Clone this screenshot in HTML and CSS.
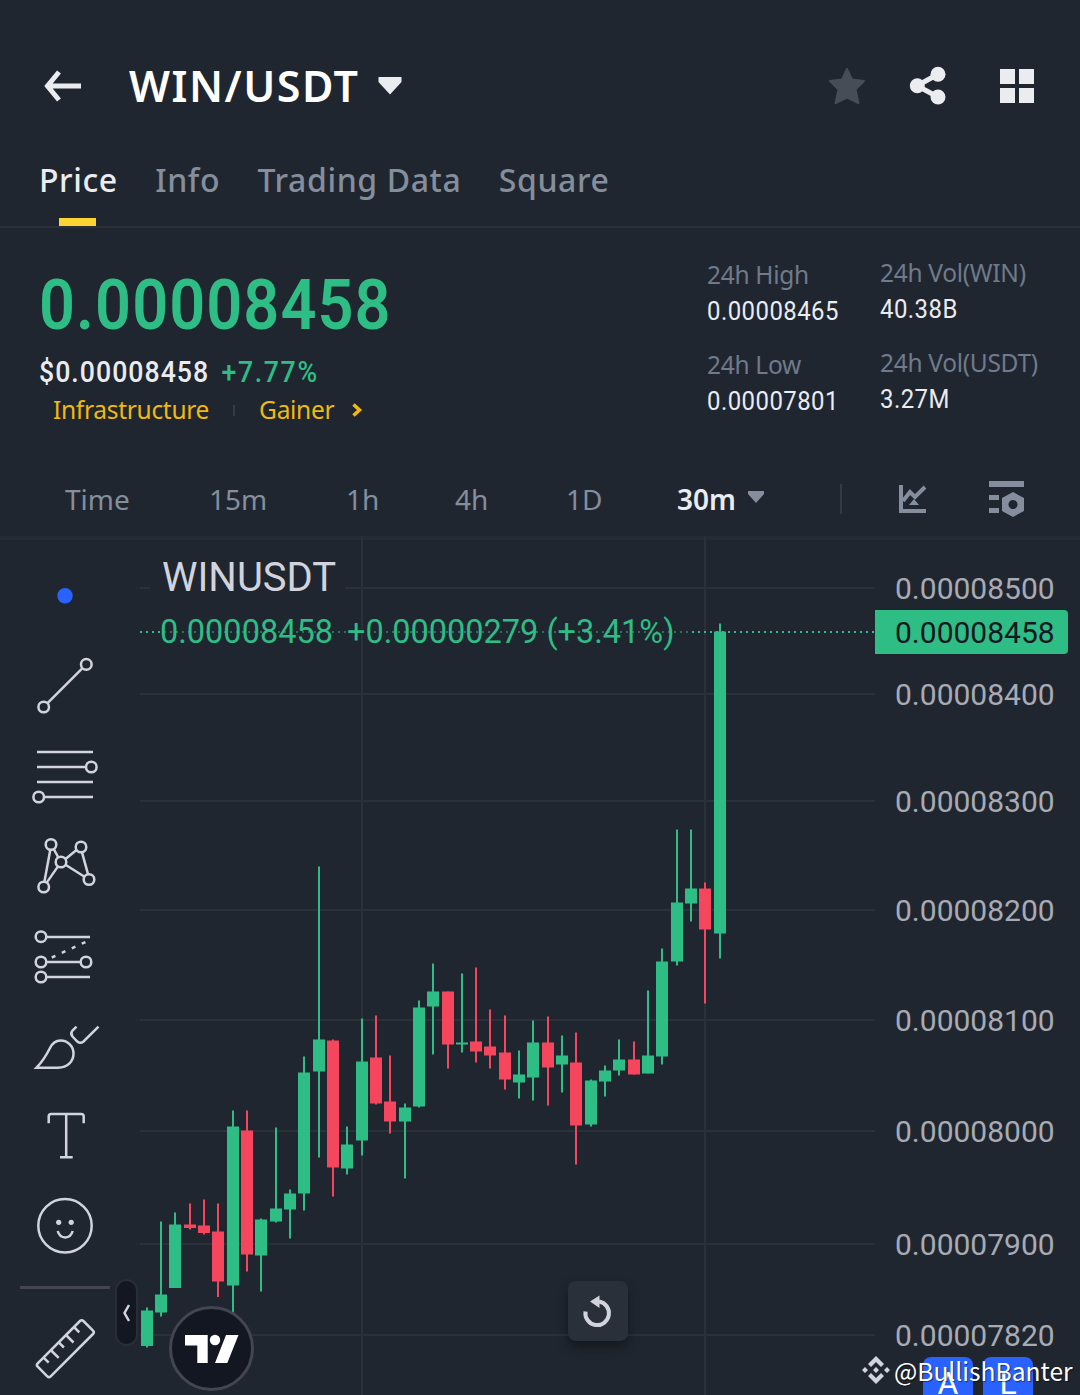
FILE: index.html
```html
<!DOCTYPE html>
<html lang="en">
  <head>
    <meta charset="UTF-8" />
    <meta name="viewport" content="width=device-width, initial-scale=1.0" />
    <title>WIN/USDT</title>
    <link rel="stylesheet" href="styles.css">
  </head>
  <body>
    <header class="header">
      <svg class="back" width="38" height="32" viewBox="0 0 38 32">
        <path d="M15 2 L3.500 16 L15 30 M3 16 H37" />
      </svg>
      <h1 class="pair">WIN/USDT</h1>
      <svg class="pair-caret" width="24" height="18" viewBox="0 0 24 18">
        <path d="M0.5 0 H23.5 V5 L12 17.5 L0.5 5 Z" />
      </svg>
      <div class="header-icons">
        <svg class="star" width="38" height="40" viewBox="0 0 38 40">
          <path d="M19 3 L24 13.500 L36 15 L27.500 23.500 L30.500 37 L19 31.500 L7.500 37 L10.500 23.500 L2 15 L14 13.500 Z" />
        </svg>
        <svg class="share" width="38" height="40" viewBox="0 0 38 40">
          <path d="M29 8.300 L8 19.700 L29 31" />
          <circle cx="29" cy="8.300" r="7.500" />
          <circle cx="8.300" cy="19.700" r="7.500" />
          <circle cx="29" cy="31" r="7.500" />
        </svg>
        <svg class="apps" width="34" height="34" viewBox="0 0 34 34">
          <path d="M0 0h15v15H0z M19 0h15v15H19z M0 19h15v15H0z M19 19h15v15H19z" />
        </svg>
      </div>
    </header>

    <nav class="tabs">
      <a class="tab active">Price</a>
      <a class="tab">Info</a>
      <a class="tab">Trading Data</a>
      <a class="tab">Square</a>
    </nav>

    <section class="summary">
      <div class="last">
        <div class="price">0.00008458</div>
        <div class="fiat">$0.00008458 <span class="change">+7.77%</span></div>
        <div class="tags">
          <span>Infrastructure</span>
          <i class="tag-line"></i>
          <span>Gainer</span>
          <svg class="tag-arrow" width="10" height="14" viewBox="0 0 10 14">
            <path d="M1.500 1.500 L7.500 7 L1.500 12.500" />
          </svg>
        </div>
      </div>
      <dl class="stats">
        <dt>24h High</dt>
        <dd>0.00008465</dd>
        <dt>24h Low</dt>
        <dd>0.00007801</dd>
      </dl>
      <dl class="stats volume">
        <dt>24h Vol(WIN)</dt>
        <dd>40.38B</dd>
        <dt>24h Vol(USDT)</dt>
        <dd>3.27M</dd>
      </dl>
    </section>

    <div class="intervals">
      <span>Time</span>
      <span>15m</span>
      <span>1h</span>
      <span>4h</span>
      <span>1D</span>
      <span class="selected">30m
        <svg width="16" height="12" viewBox="0 0 16 12"><path d="M0 0 H16 V3 L8 12 L0 3 Z" /></svg>
      </span>
      <i class="interval-line"></i>
      <svg class="indicator" width="28" height="28" viewBox="0 0 28 28">
        <path d="M2 0 V26 H27 M4 16 L11 7 L16 12 L26 2" />
        <path class="fill" d="M15 14 L20 20 H10 Z" />
      </svg>
      <svg class="settings" width="36" height="36" viewBox="0 0 36 36">
        <path d="M0 0h35v6H0z M0 14h10v5H0z M0 27h10v5H0z" />
        <path fill-rule="evenodd" d="M24 11 L35 17 V30 L24 36 L13 30 V17 Z M24 19 a4.500 4.500 0 1 0 0.010 0 Z" />
      </svg>
    </div>

    <main class="chart">
      <aside class="tools">
        <svg viewBox="0 0 90 90"><circle class="dot" cx="45" cy="44.700" r="7.700" /></svg>
        <svg viewBox="0 0 90 90">
          <circle cx="66.300" cy="23.400" r="5.300" /><circle cx="23.700" cy="66" r="5.300" />
          <path d="M62.500 27.200 L27.500 62.200" />
        </svg>
        <svg viewBox="0 0 90 90">
          <path d="M17 21 H73 M17 36 H66 M17 51 H73 M24 66 H73" />
          <circle cx="71.300" cy="36" r="5.300" /><circle cx="18.700" cy="66" r="5.300" />
        </svg>
        <svg viewBox="0 0 90 90">
          <circle cx="31" cy="23.500" r="5.300" /><circle cx="61" cy="26" r="5.300" />
          <circle cx="41" cy="41" r="5.300" /><circle cx="69" cy="58.500" r="5.300" />
          <circle cx="23.700" cy="66" r="5.300" />
          <path d="M33.700 28 L38.300 36.400 M45.500 38 L56.500 29 M62 31.300 L68 53.200 M45.500 43.800 L64.500 55.700 M38 45.400 L26.700 61.600 M30.300 28.800 L24.400 60.700" />
        </svg>
        <svg viewBox="0 0 90 90">
          <circle cx="21" cy="25.700" r="5.300" /><circle cx="21" cy="51" r="5.300" />
          <circle cx="66" cy="51" r="5.300" /><circle cx="21" cy="66" r="5.300" />
          <path d="M26.300 26 H70 M26.300 51 H60.700 M26.300 66 H70" />
          <path stroke-dasharray="4 7" d="M31.800 46.500 L67 30.300" />
        </svg>
        <svg viewBox="0 0 90 90">
          <path d="M16.500 66.700 C24 59 27 53 30 47 C33 41 37 39.500 40.500 39.500 C48 39.500 53.500 45.500 53.500 52.500 C53.500 60 48 66.700 38 66.700 Z" />
          <path d="M56.500 25.700 L52.500 29.500 Q50 32.500 52.500 35.500 L57.300 40.500 Q60.300 43 63.500 40.500 L78.500 25.700" />
        </svg>
        <svg viewBox="0 0 90 90">
          <path d="M28.700 32.300 V25.500 Q28.700 23 31.200 23 H61.200 Q63.700 23 63.700 25.500 V32.300 M46.200 23 V66.300 M40 66.300 H52.700" />
        </svg>
        <svg viewBox="0 0 90 90">
          <circle cx="45" cy="44.700" r="26.700" />
          <circle class="eye" cx="38.700" cy="41.300" r="2.600" /><circle class="eye" cx="51.200" cy="41.300" r="2.600" />
          <path d="M37.700 50 Q39.500 56.400 45.200 56.400 Q50.900 56.400 52.700 50" />
        </svg>
        <hr class="tools-line">
        <svg viewBox="0 0 90 90">
          <path d="M60 18 Q61.700 16.300 63.400 18 L73 27.600 Q74.700 29.300 73 31 L30.700 73.300 Q29 75 27.300 73.300 L17.700 63.700 Q16 62 17.700 60.300 Z" />
          <path d="M23.300 54.300 L28.700 59.700 M30.700 47 L38.700 54.800 M38.700 39.300 L43.900 44.500 M46 32 L53.500 39.500 M54 24 L59.300 29.300" />
        </svg>
        <button class="collapse" aria-label="Hide toolbar">
          <svg width="8" height="18" viewBox="0 0 8 18"><path d="M6 1 L1.500 9 L6 17" /></svg>
        </button>
      </aside>
      <div class="plot">
        <svg id="candles" width="940" height="855" viewBox="140 540 940 855"></svg>
        <div class="legend">
          <div class="symbol">WINUSDT</div>
          <div class="values"><span>0.00008458</span><span>+0.00000279 (+3.41%)</span></div>
        </div>
        <div class="tv">
          <svg width="54" height="28" viewBox="0 0 54 28">
            <path d="M0 0 H22.700 V28 H12.300 V10.500 H0 Z M41 0 H53.500 L42.300 28 H30 Z" />
            <circle cx="30" cy="5" r="5.200" />
          </svg>
        </div>
        <button class="reset" aria-label="Reset chart">
          <svg width="32" height="36" viewBox="0 0 32 36">
            <path class="arc" d="M3.500 18.500 A11.800 11.800 0 1 0 17 8.600" />
            <path d="M8 8.600 L17.500 2.500 V15 Z" />
          </svg>
        </button>
        <div class="scale-modes"><b>A</b><b>L</b></div>
        <div class="watermark">
          <svg width="28" height="28" viewBox="0 0 28 28">
            <path d="M14 0 L22 8 L19 11 L14 6 L9 11 L6 8 Z M14 28 L22 20 L19 17 L14 22 L9 17 L6 20 Z M14 11 L17 14 L14 17 L11 14 Z M3 11 L6 14 L3 17 L0 14 Z M25 11 L28 14 L25 17 L22 14 Z" />
          </svg>
          <span>@BullishBanter</span>
        </div>
      </div>
    </main>
    <script src="chart.js"></script>
  </body>
</html>
```

FILE: chart.js
```js
const UP = "#2ebd85";
const DOWN = "#f6465d";

// x, high, body top, body bottom, low, color
const candles = [
  [147, 1307.5, 1310.5, 1346, 1347.5, UP],
  [161, 1221.5, 1294.5, 1312.5, 1316.5, UP],
  [175, 1212.5, 1224.5, 1288, 1288, UP],
  [190, 1203.5, 1224.5, 1228, 1229.5, DOWN],
  [204, 1199.5, 1225.5, 1233, 1234.5, DOWN],
  [218, 1203.5, 1231.5, 1281.5, 1297, DOWN],
  [233, 1110.5, 1126.5, 1285.5, 1330, UP],
  [247, 1110.5, 1130.5, 1254.5, 1271.5, DOWN],
  [261, 1218.5, 1219.5, 1255.5, 1291.5, UP],
  [276, 1127.5, 1208.5, 1221.5, 1222.5, UP],
  [290, 1189.5, 1193.5, 1209.5, 1238.5, UP],
  [304, 1056.5, 1072.5, 1193.5, 1210.5, UP],
  [319, 866.5, 1039.5, 1071.5, 1157.5, UP],
  [333, 1039.5, 1040.5, 1167.5, 1196.5, DOWN],
  [347, 1126.5, 1144.5, 1168.5, 1174.5, UP],
  [362, 1018.5, 1061.5, 1140.5, 1155.5, UP],
  [376, 1015.5, 1057.5, 1103.5, 1104.5, DOWN],
  [390, 1055.5, 1101.5, 1121.5, 1133.5, DOWN],
  [405, 1103.5, 1107.5, 1121.5, 1178.5, UP],
  [419, 1000.5, 1007.5, 1106.5, 1107.5, UP],
  [433, 963.5, 991.5, 1006.5, 1054.5, UP],
  [448, 991.5, 991.5, 1044.5, 1068.5, DOWN],
  [462, 973.5, 1042.5, 1044.5, 1052.5, UP],
  [476, 967.5, 1041.5, 1051.5, 1062.5, DOWN],
  [490, 1009.5, 1046.5, 1055.5, 1068.5, DOWN],
  [505, 1015.5, 1052.5, 1079.5, 1089.5, DOWN],
  [519, 1050.5, 1074.5, 1082.5, 1098.5, UP],
  [533, 1020.5, 1042.5, 1077.5, 1100.5, UP],
  [548, 1016.5, 1042.5, 1067.5, 1105.5, DOWN],
  [562, 1035.5, 1055.5, 1064.5, 1092.5, UP],
  [576, 1032.5, 1062.5, 1125.5, 1164.5, DOWN],
  [591, 1079.5, 1080.5, 1124.5, 1126.5, UP],
  [605, 1065.5, 1070.5, 1081.5, 1096.5, UP],
  [619, 1039.5, 1059.5, 1070.5, 1075.5, UP],
  [634, 1041.5, 1059.5, 1074.5, 1074.5, DOWN],
  [648, 990.5, 1055.5, 1073.5, 1073.5, UP],
  [662, 948.5, 961.5, 1056.5, 1064.5, UP],
  [677, 829.5, 902.5, 961.5, 965.5, UP],
  [691, 829.5, 888.5, 903.5, 921.5, UP],
  [705, 882.5, 888.5, 929.5, 1003.5, DOWN],
  [720, 623.5, 631.5, 933.5, 958.5, UP],
];

const levels = [
  ["0.00008500", 588],
  ["0.00008400", 694],
  ["0.00008300", 801],
  ["0.00008200", 910],
  ["0.00008100", 1020],
  ["0.00008000", 1131],
  ["0.00007900", 1244],
  ["0.00007820", 1335],
];

let svg = "";

[362, 705].forEach((x) => {
  svg += `<line class="grid" x1="${x}" x2="${x}" y1="536" y2="1395" />`;
});

levels.forEach(([label, y]) => {
  svg += `<line class="grid" x1="140" x2="875" y1="${y}" y2="${y}" />`;
  svg += `<text class="level" x="895" y="${y + 11}">${label}</text>`;
});

candles.forEach(([x, high, top, bottom, low, color]) => {
  svg += `<rect x="${x - 1}" y="${high}" width="2" height="${low - high}" fill="${color}" />`;
  svg += `<rect x="${x - 6}" y="${top}" width="12" height="${bottom - top}" fill="${color}" />`;
});

// last price
svg += `<line class="last-line" x1="140" x2="160" y1="632" y2="632" />`;
svg += `<line class="last-line dim" x1="164" x2="692" y1="632" y2="632" />`;
svg += `<line class="last-line" x1="692" x2="875" y1="632" y2="632" />`;
svg += `<path fill="${UP}" d="M875 610 H1064 Q1068 610 1068 614 V650 Q1068 654 1064 654 H875 Z" />`;
svg += `<text class="level current" x="895" y="643">0.00008458</text>`;

document.getElementById("candles").innerHTML = svg;
```

FILE: styles.css
```css
* {
  box-sizing: border-box;
}
body {
  margin: 0;
  width: 1080px;
  height: 1395px;
  overflow: hidden;
  background: #202630;
  color: #eaecef;
  font-family: "Noto Sans", sans-serif;
}
svg {
  display: block;
  overflow: visible;
}
button {
  padding: 0;
  border: none;
}

/* header */
.header {
  display: flex;
  align-items: center;
  height: 132px;
  padding: 40px 46px 0 44px;
}
.back {
  fill: none;
  stroke: #eaecef;
  stroke-width: 5;
}
.pair {
  margin: 0 18px 0 47px;
  color: #fff;
  font-size: 43px;
  font-weight: 600;
  line-height: 60px;
  letter-spacing: 1.500px;
}
.pair-caret {
  fill: #eaecef;
}
.header-icons {
  display: flex;
  align-items: center;
  margin-left: auto;
}
.star {
  fill: #474d57;
  stroke: #474d57;
  stroke-width: 2;
  stroke-linejoin: round;
}
.share {
  margin: 0 53px 0 43px;
  fill: #eaecef;
}
.share path {
  fill: none;
  stroke: #eaecef;
  stroke-width: 5;
}
.apps {
  fill: #eaecef;
}

/* tabs */
.tabs {
  display: flex;
  gap: 37.500px;
  height: 96px;
  padding-left: 39px;
  border-bottom: 2px solid #2b313b;
  font-size: 32px;
  font-weight: 500;
  line-height: 96px;
  letter-spacing: 0.600px;
}
.tab {
  position: relative;
  color: #848e9c;
}
.tab.active {
  color: #eaecef;
}
.tab.active::after {
  content: "";
  position: absolute;
  left: 20px;
  bottom: 0;
  width: 37px;
  height: 8px;
  background: #fcd535;
}

/* summary */
.summary {
  display: flex;
  height: 237px;
  padding: 42px 0 0 39px;
}
.last {
  width: 668px;
}
.price {
  color: #2ebd85;
  font: 600 70px/70px Roboto, sans-serif;
  letter-spacing: 1.200px;
  transform: scaleX(0.9);
  transform-origin: left;
}
.fiat {
  margin-top: 13px;
  font: 500 29px/38px Roboto, sans-serif;
  letter-spacing: 1.100px;
  transform: scaleX(0.92);
  transform-origin: left;
}
.change {
  margin-left: 5px;
  color: #2ebd85;
  letter-spacing: 1.800px;
}
.tags {
  display: flex;
  align-items: center;
  padding-left: 14px;
  color: #f0b90b;
  font-size: 24.500px;
  line-height: 38px;
  letter-spacing: -0.300px;
}
.tag-line {
  width: 2px;
  height: 11px;
  margin: 0 24px;
  background: #333b47;
}
.tag-arrow {
  margin-left: 18px;
  fill: none;
  stroke: #f0b90b;
  stroke-width: 3.500;
}
.stats {
  width: 173px;
  margin: -13px 0 0;
  line-height: 36px;
}
.volume {
  margin-top: -15px;
}
.stats dt {
  color: #707a8a;
  font-size: 24.500px;
  letter-spacing: -0.300px;
  white-space: nowrap;
}
.stats dd {
  margin: 0 0 18px;
  font: 400 26px/36px Roboto, sans-serif;
  letter-spacing: 0.500px;
  transform: scaleX(0.92);
  transform-origin: left;
}

/* intervals */
.intervals {
  display: grid;
  grid-template-columns: 144px 137px 109px 111px 111px 163px 59px 90px 60px;
  align-items: center;
  height: 75px;
  padding: 0 0 3px 65px;
  border-bottom: 4px solid #262c36;
  color: #848e9c;
  font-size: 28px;
}
.intervals svg {
  fill: #848e9c;
}
.selected {
  display: flex;
  align-items: center;
  gap: 12px;
  color: #eaecef;
  font-weight: 600;
}
.selected svg {
  margin-top: -4px;
}
.interval-line {
  width: 2px;
  height: 30px;
  background: #333b47;
}
.intervals .indicator {
  fill: none;
  stroke: #848e9c;
  stroke-width: 4;
}
.indicator .fill {
  fill: #848e9c;
  stroke: none;
}

/* chart */
.chart {
  display: flex;
  height: 855px;
}
.tools {
  position: relative;
  width: 140px;
  padding: 11px 0 0 20px;
}
.tools > svg {
  width: 90px;
  height: 90px;
  fill: none;
  stroke: #d1d4dc;
  stroke-width: 2.500;
}
.tools .dot {
  fill: #2962ff;
  stroke: none;
}
.tools .eye {
  fill: #d1d4dc;
  stroke: none;
}
.tools-line {
  width: 90px;
  height: 3px;
  margin: 15px 0 14px;
  border: none;
  background: #434651;
}
.collapse {
  position: absolute;
  top: 739px;
  left: 115px;
  display: flex;
  align-items: center;
  justify-content: center;
  width: 23px;
  height: 67px;
  border: 2px solid #282d37;
  border-radius: 12px;
  background: #131722;
  z-index: 1;
}
.collapse svg {
  fill: none;
  stroke: #d1d4dc;
  stroke-width: 2.500;
}
.plot {
  position: relative;
  width: 940px;
}
.grid {
  stroke: #2b313b;
  stroke-width: 2;
}
.level {
  fill: #a8abb3;
  font: 30px Roboto, sans-serif;
}
.level.current {
  fill: #131722;
}
.last-line {
  stroke: #2ebd85;
  stroke-width: 2;
  stroke-dasharray: 2 4;
}
.last-line.dim {
  opacity: 0.5;
}
.legend {
  position: absolute;
  top: 9px;
  left: 10px;
  color: #d1d4dc;
  font-family: Roboto, sans-serif;
}
.symbol {
  width: 195px;
  padding-left: 12px;
  background: #202630;
  font-size: 40px;
  line-height: 58px;
}
.values {
  display: flex;
  gap: 14px;
  padding-left: 10px;
  color: #2ebd85;
  font-size: 32.500px;
  line-height: 50px;
}
.tv {
  position: absolute;
  top: 766px;
  left: 29px;
  display: flex;
  align-items: center;
  justify-content: center;
  width: 85px;
  height: 85px;
  border: 3px solid #434651;
  border-radius: 50%;
  background: #131722;
}
.tv svg {
  fill: #fff;
}
.reset {
  position: absolute;
  top: 741px;
  left: 428px;
  display: flex;
  align-items: center;
  justify-content: center;
  width: 60px;
  height: 60px;
  border-radius: 8px;
  background: #2a303a;
  box-shadow: 0 6px 12px rgba(0, 0, 0, 0.4);
}
.reset svg {
  fill: #d1d4dc;
}
.reset .arc {
  fill: none;
  stroke: #d1d4dc;
  stroke-width: 4;
}
.scale-modes {
  position: absolute;
  top: 817px;
  left: 783px;
  display: flex;
  gap: 10px;
}
.scale-modes b {
  width: 50px;
  height: 60px;
  border-radius: 8px;
  background: #2962ff;
  color: #fff;
  font: 32px/53px Roboto, sans-serif;
  text-align: center;
}
.watermark {
  position: absolute;
  top: 812px;
  left: 722px;
  display: flex;
  align-items: center;
  gap: 4px;
  color: #fff;
  font: 24.600px/36px "Noto Sans CJK SC", sans-serif;
  text-shadow: 1px 1px 1px rgba(0, 0, 0, 0.5);
}
.watermark svg {
  fill: #d1d4dc;
}
```
